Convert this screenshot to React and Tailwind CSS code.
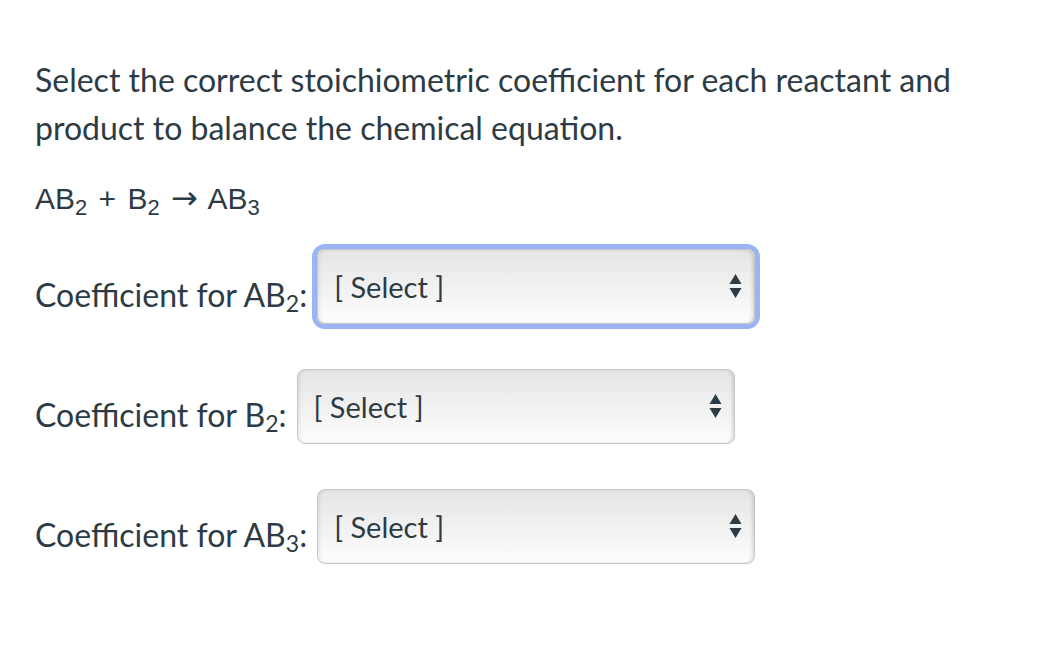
import { useState } from 'react';

const ROWS = [
  { id: 'ab2', label: 'AB', sub: '2', focused: true },
  { id: 'b2', label: 'B', sub: '2', focused: false },
  { id: 'ab3', label: 'AB', sub: '3', focused: false },
];

function Arrows() {
  return (
    <svg width="13" height="26" viewBox="0 0 13 26" className="pointer-events-none absolute right-[13px] top-1/2 -translate-y-1/2">
      <path d="M6.5 0 L12.5 10 L0.5 10 Z" fill="#2d3b45" />
      <path d="M0.5 14 L12.5 14 L6.5 24 Z" fill="#2d3b45" />
    </svg>
  );
}

function CoefSelect({ focused }) {
  const [value, setValue] = useState('');
  return (
    <div className="relative">
      <select
        value={value}
        onChange={e => setValue(e.target.value)}
        className={`block w-[438px] h-[75px] appearance-none rounded-[8px] border border-[#c6c6c6]
                   bg-gradient-to-b from-[#e5e5e5] to-[#fdfdfd] pl-[16px] pr-10 text-[29px] text-[#2d3b45]
                   outline-none ${
                     focused
                       ? 'shadow-[0_0_0_5px_#9ab5f1,inset_-3px_0_4px_-2px_rgba(0,0,0,0.18),inset_3px_0_4px_-2px_rgba(0,0,0,0.10)]'
                       : 'shadow-[inset_-3px_0_4px_-2px_rgba(0,0,0,0.18),inset_3px_0_4px_-2px_rgba(0,0,0,0.10)]'
                   }`}
        style={{ fontFamily: 'Lato, "Noto Sans", sans-serif' }}
      >
        <option value="">[ Select ]</option>
        <option value="1">1</option>
        <option value="2">2</option>
        <option value="3">3</option>
        <option value="4">4</option>
      </select>
      <Arrows />
    </div>
  );
}

export default function App() {
  return (
    <div
      className="min-h-screen bg-white pl-[35px] pt-[56px] text-[#2d3b45]"
      style={{ fontFamily: 'Lato, "Noto Sans", sans-serif' }}
    >
      <p className="w-[990px] text-[32px] leading-[48px]">
        Select the correct stoichiometric coefficient for each reactant and product to balance the chemical equation.
      </p>

      {/* ── Equation ──────────────────────────── */}
      <p
        className="mt-[26px] text-[30px] leading-[40px] [word-spacing:3px]"
        style={{ fontFamily: '"Liberation Sans", Arial, sans-serif' }}
      >
        AB<sub className="text-[22px]">2</sub> + B<sub className="text-[22px]">2</sub>{' '}
        <span className="text-[32px]" style={{ fontFamily: '"DejaVu Sans", sans-serif' }}>→</span> AB
        <sub className="text-[22px]">3</sub>
      </p>

      {/* ── Coefficient rows ──────────────────── */}
      <div className="mt-[30px] flex flex-col gap-[45px]">
        {ROWS.map(row => (
          <div key={row.id} className="flex items-center">
            <span className="mt-[16px] mr-[10px] text-[32px] leading-[40px]">
              Coefficient for {row.label}
              <sub className="text-[23px]">{row.sub}</sub>:
            </span>
            <CoefSelect focused={row.focused} />
          </div>
        ))}
      </div>
    </div>
  );
}
